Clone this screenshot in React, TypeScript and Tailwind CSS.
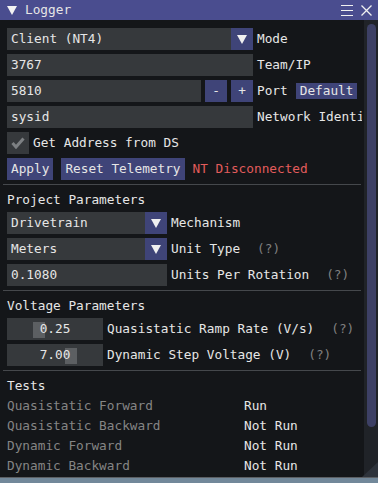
import React from "react";

const frame = "shrink-0 bg-[#36393c]";
const btn = "shrink-0 bg-[#3f4478]";

function Arrow() {
  return (
    <div className={`w-[22px] h-[22px] ${btn} flex items-center justify-center`}>
      <svg width="10" height="9" viewBox="0 0 10 9">
        <polygon points="0,0 10,0 5,9" fill="#f0f0f0" />
      </svg>
    </div>
  );
}

function Combo({ value, width }: { value: string; width: string }) {
  return (
    <div className={`flex shrink-0 h-[22px] ${width}`}>
      <div className={`flex-1 ${frame} pl-1 flex items-center`}>{value}</div>
      <Arrow />
    </div>
  );
}

function Help() {
  return <span className="ml-[17px] text-[#808080]">(?)</span>;
}

function Separator() {
  return <div className="-ml-[4px] w-[358px] h-px bg-[#45484c] mb-[3px] shrink-0" />;
}

function Slider({ value, grab }: { value: string; grab: string }) {
  return (
    <div className={`relative w-[96px] h-[22px] ${frame} flex items-center justify-center`}>
      <div className={`absolute top-[4px] h-[16px] w-[12px] bg-[#5c5f62] ${grab}`} />
      <span className="relative">{value}</span>
    </div>
  );
}

const tests = [
  ["Quasistatic Forward", "Run"],
  ["Quasistatic Backward", "Not Run"],
  ["Dynamic Forward", "Not Run"],
  ["Dynamic Backward", "Not Run"],
];

export default function App() {
  return (
    <div className="w-[378px] h-[483px] bg-[#72889a] overflow-hidden font-['DejaVu_Sans_Mono',monospace] text-[12.75px] leading-4 text-[#e6e6e6]">
      <div className="relative h-[478px] flex flex-col bg-[#141619] border-b border-[#5c5f63]">
        {/* title bar */}
        <div className="h-5 shrink-0 bg-[#4a4d8f] flex items-center pl-[7px]">
          <svg width="10" height="9" viewBox="0 0 10 9" className="mt-px">
            <polygon points="0,0 10,0 5,9" fill="#f2f2f2" />
          </svg>
          <span className="ml-[8px]">Logger</span>
          <div className="ml-auto flex items-center gap-[8px] pr-[6px]">
            <svg width="12" height="11" viewBox="0 0 12 11">
              <path d="M0 0.5H12M0 5.5H12M0 10.5H12" stroke="#f0f0f0" strokeWidth="1" />
            </svg>
            <svg width="11" height="11" viewBox="0 0 11 11">
              <path d="M0.5 0.5L10.5 10.5M10.5 0.5L0.5 10.5" stroke="#f0f0f0" strokeWidth="1.3" />
            </svg>
          </div>
        </div>

        <div className="flex flex-1 min-h-0">
          {/* content */}
          <div className="w-[362px] shrink-0 overflow-hidden pl-[7px] pt-2 flex flex-col gap-1 whitespace-nowrap">
            <div className="flex items-center h-[22px]">
              <Combo value="Client (NT4)" width="w-[246px]" />
              <span className="ml-1">Mode</span>
            </div>
            <div className="flex items-center h-[22px]">
              <div className={`w-[246px] h-[22px] ${frame} pl-1 flex items-center`}>3767</div>
              <span className="ml-1">Team/IP</span>
            </div>
            <div className="flex items-center h-[22px]">
              <div className={`w-[194px] h-[22px] ${frame} pl-1 flex items-center`}>5810</div>
              <div className={`ml-1 w-[22px] h-[22px] ${btn} flex items-center justify-center`}>-</div>
              <div className={`ml-1 w-[22px] h-[22px] ${btn} flex items-center justify-center`}>+</div>
              <span className="ml-1">Port</span>
              <div className={`ml-2 h-4 px-1 ${btn} flex items-center`}>Default</div>
            </div>
            <div className="flex items-center h-[22px]">
              <div className={`w-[246px] h-[22px] ${frame} pl-1 flex items-center`}>sysid</div>
              <span className="ml-1 shrink-0">Network Identity</span>
            </div>
            <div className="flex items-center h-[22px]">
              <div className={`w-[22px] h-[22px] ${frame} flex items-center justify-center`}>
                <svg width="14" height="12" viewBox="0 0 14 12">
                  <polyline points="1.5,6 5,10 12.5,1.5" fill="none" stroke="#7d8083" strokeWidth="3" />
                </svg>
              </div>
              <span className="ml-1">Get Address from DS</span>
            </div>
            <div className="flex items-center h-[22px] gap-2">
              <div className={`h-[22px] px-1 ${btn} flex items-center`}>Apply</div>
              <div className={`h-[22px] px-1 ${btn} flex items-center`}>Reset Telemetry</div>
              <span className="text-[#e25c5c]">NT Disconnected</span>
            </div>
            <Separator />
            <div className="h-4">Project Parameters</div>
            <div className="flex items-center h-[22px]">
              <Combo value="Drivetrain" width="w-[160px]" />
              <span className="ml-1">Mechanism</span>
            </div>
            <div className="flex items-center h-[22px]">
              <Combo value="Meters" width="w-[160px]" />
              <span className="ml-1">Unit Type</span>
              <Help />
            </div>
            <div className="flex items-center h-[22px]">
              <div className={`w-[160px] h-[22px] ${frame} pl-1 flex items-center`}>0.1080</div>
              <span className="ml-1">Units Per Rotation</span>
              <Help />
            </div>
            <Separator />
            <div className="h-4">Voltage Parameters</div>
            <div className="flex items-center h-[22px]">
              <Slider value="0.25" grab="left-[26px]" />
              <span className="ml-1">Quasistatic Ramp Rate (V/s)</span>
              <Help />
            </div>
            <div className="flex items-center h-[22px]">
              <Slider value="7.00" grab="left-[58px]" />
              <span className="ml-1">Dynamic Step Voltage (V)</span>
              <Help />
            </div>
            <Separator />
            <div className="h-4">Tests</div>
            {tests.map(([name, status]) => (
              <div key={name} className="flex h-4">
                <span className="w-[237px] shrink-0 text-[#858585]">{name}</span>
                <span>{status}</span>
              </div>
            ))}
          </div>

          {/* scrollbar */}
          <div className="ml-[2px] w-[14px] shrink-0 bg-[#202328] pl-[3px] pt-[4px]">
            <div className="w-[9px] h-[403px] rounded-full bg-[#3d4065]" />
          </div>
        </div>

        <svg width="16" height="15" viewBox="0 0 16 15" className="absolute right-0 bottom-0">
          <polygon points="16,0 16,15 0,15" fill="#2e333b" />
        </svg>
      </div>
    </div>
  );
}
